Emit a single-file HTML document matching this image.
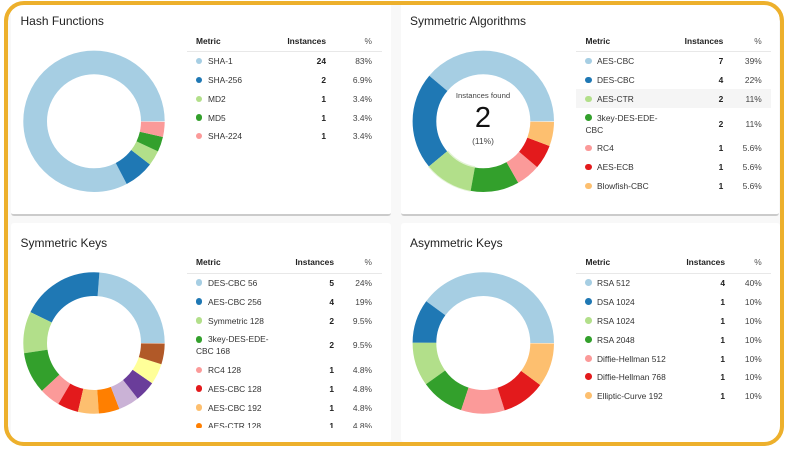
<!DOCTYPE html>
<html><head><meta charset="utf-8"><style>
html,body{margin:0;padding:0;background:#fff}
body{width:789px;height:449px;overflow:hidden;position:relative;font-family:"Liberation Sans",sans-serif;color:#222}
.frame{position:absolute;left:4px;top:1px;width:772px;height:437px;border:4px solid #edb02c;border-radius:20px;background:#f8f8f8;overflow:hidden}
.card{position:absolute;background:#fff;border-radius:3px;overflow:hidden}
.s{border-bottom:2px solid #cbcbcb;box-sizing:border-box}
.t{position:absolute;font-size:12px;line-height:14px;color:#222;white-space:nowrap}
.area{position:absolute;left:0;top:0;width:789px;height:449px;overflow:hidden;filter:blur(.35px)}
.h{position:absolute;font-size:8.4px;line-height:12px;font-weight:bold;color:#222;white-space:nowrap}
.l{position:absolute;height:1px;width:195px;background:#e8e8e8}
.n,.c,.p{position:absolute;font-size:8.4px;line-height:12px;white-space:nowrap;color:#333}
.c{font-weight:bold;color:#222;text-align:right;width:40px}
.p{text-align:right;width:40px;color:#444}
.d{position:absolute;width:6.8px;height:6.8px;margin:-.2px;border-radius:50%}
svg{position:absolute;left:0;top:0}
circle{fill:none}
</style></head><body>
<div class="frame"></div>
<div class="area">
<div class="card s" style="left:11px;top:0;width:380px;height:216px"></div>
<div class="card s" style="left:400.5px;top:0;width:378.5px;height:216px"></div>
<div class="card" style="left:11px;top:223px;width:380px;height:219px"></div>
<div class="card" style="left:400.5px;top:223px;width:379px;height:219px"></div>

<svg width="789" height="449" viewBox="0 0 789 449">
<g stroke-width="23.7" transform="translate(94 121.3) scale(1 -1)">
<circle r="58.85" pathLength="29" stroke="#a6cee3" stroke-dasharray="24 29"/>
<circle r="58.85" pathLength="29" stroke="#1f78b4" stroke-dasharray="2 29" stroke-dashoffset="-24"/>
<circle r="58.85" pathLength="29" stroke="#b2df8a" stroke-dasharray="1 29" stroke-dashoffset="-26"/>
<circle r="58.85" pathLength="29" stroke="#33a02c" stroke-dasharray="1 29" stroke-dashoffset="-27"/>
<circle r="58.85" pathLength="29" stroke="#fb9a99" stroke-dasharray="1 29" stroke-dashoffset="-28"/>
</g>
<g stroke-width="23.7" transform="translate(483.3 121.3) scale(1 -1)">
<circle r="58.85" pathLength="18" stroke="#a6cee3" stroke-dasharray="7 18"/>
<circle r="58.85" pathLength="18" stroke="#1f78b4" stroke-dasharray="4 18" stroke-dashoffset="-7"/>
<circle r="58.6" pathLength="18" stroke="#e3f3d5" stroke-width="26" stroke-dasharray="2 18" stroke-dashoffset="-11"/>
<circle r="58.85" pathLength="18" stroke="#b2df8a" stroke-dasharray="2 18" stroke-dashoffset="-11"/>
<circle r="58.85" pathLength="18" stroke="#33a02c" stroke-dasharray="2 18" stroke-dashoffset="-13"/>
<circle r="58.85" pathLength="18" stroke="#fb9a99" stroke-dasharray="1 18" stroke-dashoffset="-15"/>
<circle r="58.85" pathLength="18" stroke="#e31a1c" stroke-dasharray="1 18" stroke-dashoffset="-16"/>
<circle r="58.85" pathLength="18" stroke="#fdbf6f" stroke-dasharray="1 18" stroke-dashoffset="-17"/>
</g>
<g stroke-width="23.7" transform="translate(94 343) scale(1 -1)">
<circle r="58.85" pathLength="21" stroke="#a6cee3" stroke-dasharray="5 21"/>
<circle r="58.85" pathLength="21" stroke="#1f78b4" stroke-dasharray="4 21" stroke-dashoffset="-5"/>
<circle r="58.85" pathLength="21" stroke="#b2df8a" stroke-dasharray="2 21" stroke-dashoffset="-9"/>
<circle r="58.85" pathLength="21" stroke="#33a02c" stroke-dasharray="2 21" stroke-dashoffset="-11"/>
<circle r="58.85" pathLength="21" stroke="#fb9a99" stroke-dasharray="1 21" stroke-dashoffset="-13"/>
<circle r="58.85" pathLength="21" stroke="#e31a1c" stroke-dasharray="1 21" stroke-dashoffset="-14"/>
<circle r="58.85" pathLength="21" stroke="#fdbf6f" stroke-dasharray="1 21" stroke-dashoffset="-15"/>
<circle r="58.85" pathLength="21" stroke="#ff7f00" stroke-dasharray="1 21" stroke-dashoffset="-16"/>
<circle r="58.85" pathLength="21" stroke="#cab2d6" stroke-dasharray="1 21" stroke-dashoffset="-17"/>
<circle r="58.85" pathLength="21" stroke="#6a3d9a" stroke-dasharray="1 21" stroke-dashoffset="-18"/>
<circle r="58.85" pathLength="21" stroke="#ffff99" stroke-dasharray="1 21" stroke-dashoffset="-19"/>
<circle r="58.85" pathLength="21" stroke="#b15928" stroke-dasharray="1 21" stroke-dashoffset="-20"/>
</g>
<g stroke-width="23.7" transform="translate(483.3 343) scale(1 -1)">
<circle r="58.85" pathLength="10" stroke="#a6cee3" stroke-dasharray="4 10"/>
<circle r="58.85" pathLength="10" stroke="#1f78b4" stroke-dasharray="1 10" stroke-dashoffset="-4"/>
<circle r="58.85" pathLength="10" stroke="#b2df8a" stroke-dasharray="1 10" stroke-dashoffset="-5"/>
<circle r="58.85" pathLength="10" stroke="#33a02c" stroke-dasharray="1 10" stroke-dashoffset="-6"/>
<circle r="58.85" pathLength="10" stroke="#fb9a99" stroke-dasharray="1 10" stroke-dashoffset="-7"/>
<circle r="58.85" pathLength="10" stroke="#e31a1c" stroke-dasharray="1 10" stroke-dashoffset="-8"/>
<circle r="58.85" pathLength="10" stroke="#fdbf6f" stroke-dasharray="1 10" stroke-dashoffset="-9"/>
</g>
</svg>

<!-- Hash Functions -->
<div class="t" style="left:20.5px;top:13.5px">Hash Functions</div>
<div class="h" style="left:196px;top:34.7px">Metric</div>
<div class="h" style="left:266px;top:34.7px;width:60px;text-align:right">Instances</div>
<div class="h" style="left:332px;top:34.7px;width:40px;text-align:right;font-weight:normal;color:#555">%</div>
<div class="l" style="left:187px;top:51px"></div>
<i class="d" style="left:195.8px;top:57.8px;background:#a6cee3"></i><div class="n" style="left:208px;top:55px">SHA-1</div><div class="c" style="left:286px;top:55px">24</div><div class="p" style="left:332px;top:55px">83%</div>
<i class="d" style="left:195.8px;top:76.8px;background:#1f78b4"></i><div class="n" style="left:208px;top:74px">SHA-256</div><div class="c" style="left:286px;top:74px">2</div><div class="p" style="left:332px;top:74px">6.9%</div>
<i class="d" style="left:195.8px;top:95.8px;background:#b2df8a"></i><div class="n" style="left:208px;top:93px">MD2</div><div class="c" style="left:286px;top:93px">1</div><div class="p" style="left:332px;top:93px">3.4%</div>
<i class="d" style="left:195.8px;top:114.3px;background:#33a02c"></i><div class="n" style="left:208px;top:111.7px">MD5</div><div class="c" style="left:286px;top:111.7px">1</div><div class="p" style="left:332px;top:111.7px">3.4%</div>
<i class="d" style="left:195.8px;top:132.8px;background:#fb9a99"></i><div class="n" style="left:208px;top:130px">SHA-224</div><div class="c" style="left:286px;top:130px">1</div><div class="p" style="left:332px;top:130px">3.4%</div>

<!-- Symmetric Algorithms -->
<div class="t" style="left:410px;top:13.5px">Symmetric Algorithms</div>
<div style="position:absolute;left:433px;top:89.5px;width:100px;text-align:center;font-size:7.7px;line-height:12px;color:#444">Instances found</div>
<div style="position:absolute;left:433px;top:100px;width:100px;text-align:center;font-size:29px;line-height:36px;color:#111">2</div>
<div style="position:absolute;left:433px;top:134.5px;width:100px;text-align:center;font-size:8.4px;line-height:12px;color:#444">(11%)</div>
<div class="h" style="left:585.5px;top:34.7px">Metric</div>
<div class="h" style="left:663.3px;top:34.7px;width:60px;text-align:right">Instances</div>
<div class="h" style="left:721.7px;top:34.7px;width:40px;text-align:right;font-weight:normal;color:#555">%</div>
<div class="l" style="left:576px;top:51px"></div>
<div style="position:absolute;left:576px;top:89px;width:195px;height:19px;background:#f5f5f5"></div>
<i class="d" style="left:585.3px;top:57.8px;background:#a6cee3"></i><div class="n" style="left:597px;top:55px">AES-CBC</div><div class="c" style="left:683.3px;top:55px">7</div><div class="p" style="left:721.7px;top:55px">39%</div>
<i class="d" style="left:585.3px;top:76.8px;background:#1f78b4"></i><div class="n" style="left:597px;top:74px">DES-CBC</div><div class="c" style="left:683.3px;top:74px">4</div><div class="p" style="left:721.7px;top:74px">22%</div>
<i class="d" style="left:585.3px;top:95.8px;background:#b2df8a"></i><div class="n" style="left:597px;top:93px">AES-CTR</div><div class="c" style="left:683.3px;top:93px">2</div><div class="p" style="left:721.7px;top:93px">11%</div>
<i class="d" style="left:585.3px;top:114.3px;background:#33a02c"></i><div class="n" style="left:597px;top:111.7px">3key-DES-EDE-</div><div class="n" style="left:585.5px;top:123.5px">CBC</div><div class="c" style="left:683.3px;top:117.5px">2</div><div class="p" style="left:721.7px;top:117.5px">11%</div>
<i class="d" style="left:585.3px;top:144.8px;background:#fb9a99"></i><div class="n" style="left:597px;top:142px">RC4</div><div class="c" style="left:683.3px;top:142px">1</div><div class="p" style="left:721.7px;top:142px">5.6%</div>
<i class="d" style="left:585.3px;top:163.8px;background:#e31a1c"></i><div class="n" style="left:597px;top:161px">AES-ECB</div><div class="c" style="left:683.3px;top:161px">1</div><div class="p" style="left:721.7px;top:161px">5.6%</div>
<i class="d" style="left:585.3px;top:182.8px;background:#fdbf6f"></i><div class="n" style="left:597px;top:180px">Blowfish-CBC</div><div class="c" style="left:683.3px;top:180px">1</div><div class="p" style="left:721.7px;top:180px">5.6%</div>

<!-- Symmetric Keys -->
<div class="t" style="left:20.5px;top:235.5px">Symmetric Keys</div>
<div class="h" style="left:196px;top:256.3px">Metric</div>
<div class="h" style="left:274px;top:256.3px;width:60px;text-align:right">Instances</div>
<div class="h" style="left:332px;top:256.3px;width:40px;text-align:right;font-weight:normal;color:#555">%</div>
<div class="l" style="left:187px;top:273px"></div>
<div style="position:absolute;left:187px;top:275px;width:195px;height:153px;overflow:hidden">
<i class="d" style="left:8.8px;top:4.5px;background:#a6cee3"></i><div class="n" style="left:21px;top:1.7px">DES-CBC 56</div><div class="c" style="left:107px;top:1.7px">5</div><div class="p" style="left:145px;top:1.7px">24%</div>
<i class="d" style="left:8.8px;top:23.5px;background:#1f78b4"></i><div class="n" style="left:21px;top:20.7px">AES-CBC 256</div><div class="c" style="left:107px;top:20.7px">4</div><div class="p" style="left:145px;top:20.7px">19%</div>
<i class="d" style="left:8.8px;top:42.5px;background:#b2df8a"></i><div class="n" style="left:21px;top:39.7px">Symmetric 128</div><div class="c" style="left:107px;top:39.7px">2</div><div class="p" style="left:145px;top:39.7px">9.5%</div>
<i class="d" style="left:8.8px;top:60.9px;background:#33a02c"></i><div class="n" style="left:21px;top:58.3px">3key-DES-EDE-</div><div class="n" style="left:9px;top:70px">CBC 168</div><div class="c" style="left:107px;top:64px">2</div><div class="p" style="left:145px;top:64px">9.5%</div>
<i class="d" style="left:8.8px;top:91.8px;background:#fb9a99"></i><div class="n" style="left:21px;top:89px">RC4 128</div><div class="c" style="left:107px;top:89px">1</div><div class="p" style="left:145px;top:89px">4.8%</div>
<i class="d" style="left:8.8px;top:110.3px;background:#e31a1c"></i><div class="n" style="left:21px;top:107.5px">AES-CBC 128</div><div class="c" style="left:107px;top:107.5px">1</div><div class="p" style="left:145px;top:107.5px">4.8%</div>
<i class="d" style="left:8.8px;top:129.3px;background:#fdbf6f"></i><div class="n" style="left:21px;top:126.5px">AES-CBC 192</div><div class="c" style="left:107px;top:126.5px">1</div><div class="p" style="left:145px;top:126.5px">4.8%</div>
<i class="d" style="left:8.8px;top:147.8px;background:#ff7f00"></i><div class="n" style="left:21px;top:145px">AES-CTR 128</div><div class="c" style="left:107px;top:145px">1</div><div class="p" style="left:145px;top:145px">4.8%</div>
</div>

<!-- Asymmetric Keys -->
<div class="t" style="left:410px;top:235.5px">Asymmetric Keys</div>
<div class="h" style="left:585.5px;top:256.3px">Metric</div>
<div class="h" style="left:665px;top:256.3px;width:60px;text-align:right">Instances</div>
<div class="h" style="left:721.7px;top:256.3px;width:40px;text-align:right;font-weight:normal;color:#555">%</div>
<div class="l" style="left:576px;top:273px"></div>
<i class="d" style="left:585.3px;top:279.5px;background:#a6cee3"></i><div class="n" style="left:597px;top:276.7px">RSA 512</div><div class="c" style="left:685px;top:276.7px">4</div><div class="p" style="left:721.7px;top:276.7px">40%</div>
<i class="d" style="left:585.3px;top:298.5px;background:#1f78b4"></i><div class="n" style="left:597px;top:295.7px">DSA 1024</div><div class="c" style="left:685px;top:295.7px">1</div><div class="p" style="left:721.7px;top:295.7px">10%</div>
<i class="d" style="left:585.3px;top:317.5px;background:#b2df8a"></i><div class="n" style="left:597px;top:314.7px">RSA 1024</div><div class="c" style="left:685px;top:314.7px">1</div><div class="p" style="left:721.7px;top:314.7px">10%</div>
<i class="d" style="left:585.3px;top:336.3px;background:#33a02c"></i><div class="n" style="left:597px;top:333.5px">RSA 2048</div><div class="c" style="left:685px;top:333.5px">1</div><div class="p" style="left:721.7px;top:333.5px">10%</div>
<i class="d" style="left:585.3px;top:355.3px;background:#fb9a99"></i><div class="n" style="left:597px;top:352.5px">Diffie-Hellman 512</div><div class="c" style="left:685px;top:352.5px">1</div><div class="p" style="left:721.7px;top:352.5px">10%</div>
<i class="d" style="left:585.3px;top:373.3px;background:#e31a1c"></i><div class="n" style="left:597px;top:370.5px">Diffie-Hellman 768</div><div class="c" style="left:685px;top:370.5px">1</div><div class="p" style="left:721.7px;top:370.5px">10%</div>
<i class="d" style="left:585.3px;top:392.3px;background:#fdbf6f"></i><div class="n" style="left:597px;top:389.5px">Elliptic-Curve 192</div><div class="c" style="left:685px;top:389.5px">1</div><div class="p" style="left:721.7px;top:389.5px">10%</div>
</div>
<!-- frame border on top, outer white corners -->
<div style="position:absolute;left:4px;top:1px;width:772px;height:437px;border:4px solid #edb02c;border-radius:20px;box-shadow:0 0 0 20px #fff"></div>
</body></html>
